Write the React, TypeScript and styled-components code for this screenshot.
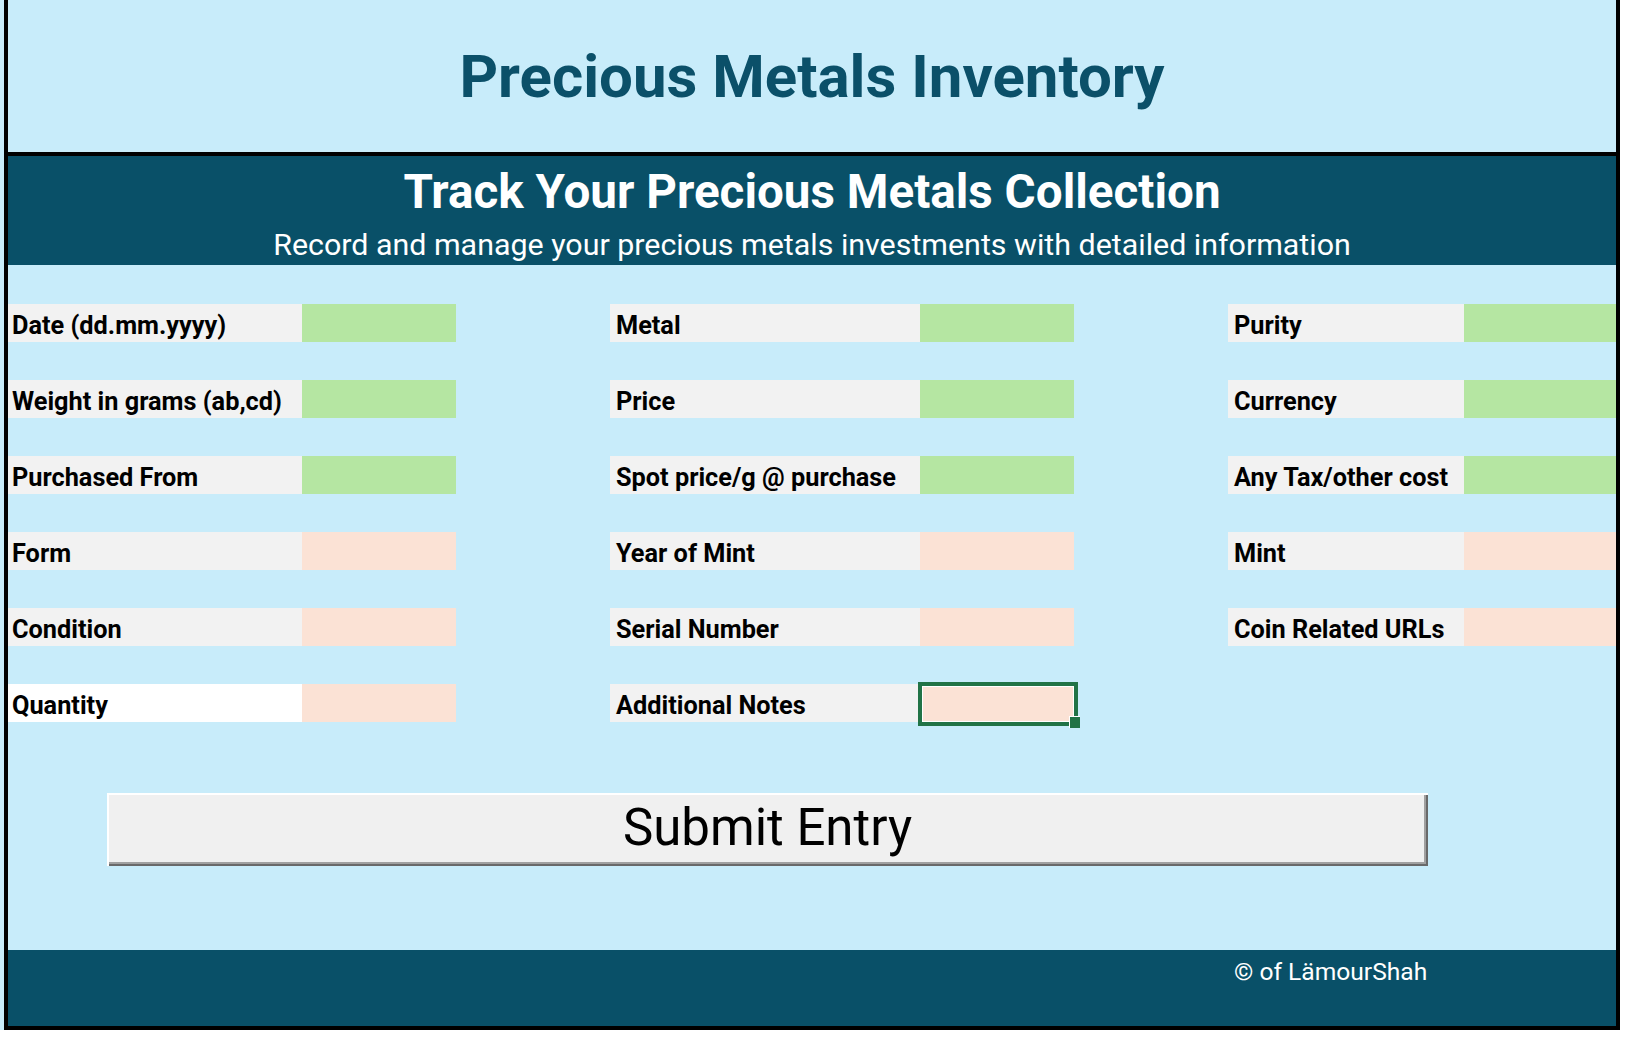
import React from "react";
import styled, { createGlobalStyle } from "styled-components";

const GlobalStyle = createGlobalStyle`
  html, body {
    margin: 0;
    padding: 0;
    background: #ffffff;
  }
  body {
    font-family: Roboto, "Liberation Sans", Arial, sans-serif;
  }
  * { box-sizing: border-box; }
`;

const LIGHT = "#C8ECFA";
const DARK = "#095068";
const INK = "#0B5069";

const Page = styled.div`
  width: 1620px;
  padding-left: 4px;
  background: ${LIGHT};
`;

const Frame = styled.div`
  width: 1616px;
  background: ${LIGHT};
  border-left: 4px solid #000;
  border-right: 4px solid #000;
  border-bottom: 4px solid #000;
  display: flex;
  flex-direction: column;
`;

const TitleBar = styled.header`
  height: 152px;
  padding-top: 41px;
  display: flex;
  justify-content: center;
  align-items: flex-start;
`;

const Title = styled.h1`
  margin: 0;
  font-family: Roboto, "Liberation Sans", sans-serif;
  font-weight: 700;
  font-size: 60px;
  line-height: 72px;
  color: ${INK};
  white-space: nowrap;
`;

const Band = styled.section`
  border-top: 4px solid #000;
  background: ${DARK};
  padding: 8px 0 2px;
  display: flex;
  flex-direction: column;
  align-items: center;
  color: #ffffff;
`;

const BandHeading = styled.h2`
  margin: 0;
  font-weight: 700;
  font-size: 47.6px;
  line-height: 56px;
  white-space: nowrap;
`;

const BandText = styled.p`
  margin: 7px 0 0;
  font-weight: 400;
  font-size: 30.4px;
  line-height: 36px;
  white-space: nowrap;
`;

const FormGrid = styled.div`
  margin-top: 39px;
  display: grid;
  grid-template-columns: 448px 464px 388px;
  column-gap: 154px;
  row-gap: 38px;
`;

const Field = styled.div<{ $labelWidth: number }>`
  height: 38px;
  display: grid;
  grid-template-columns: ${(p) => p.$labelWidth}px 1fr;
`;

const Label = styled.div<{ $bg: string; $pad: number }>`
  display: flex;
  align-items: flex-end;
  padding: 0 0 2px ${(p) => p.$pad}px;
  background: ${(p) => p.$bg};
  color: #000;
  font-weight: 700;
  font-size: 25.3px;
  line-height: 29px;
  white-space: nowrap;
  overflow: hidden;
`;

const InputCell = styled.div<{ $tone: "green" | "pink" }>`
  position: relative;
  background: ${(p) => (p.$tone === "green" ? "#B5E6A2" : "#FBE2D5")};
`;

const Selection = styled.div`
  position: absolute;
  top: -2px;
  left: -2px;
  right: -4px;
  bottom: -4px;
  border: 4px solid #217346;
  box-shadow: inset 0 0 0 1px #ffffff;
  pointer-events: none;
`;

const FillHandle = styled.div`
  position: absolute;
  right: -6px;
  bottom: -6px;
  width: 11px;
  height: 12px;
  background: #217346;
  border-left: 1px solid #ffffff;
  border-top: 1px solid #ffffff;
`;

const ButtonRow = styled.div`
  margin-top: 71px;
  padding-left: 99px;
  display: flex;
`;

const SubmitButton = styled.button`
  width: 1321px;
  height: 73px;
  padding: 0 0 4px;
  border: none;
  background: #f0f0f0;
  box-shadow: inset 2px 2px 0 #ffffff, inset -2px -2px 0 #696969,
    inset -4px -4px 0 #a0a0a0;
  font-family: Roboto, "Liberation Sans", sans-serif;
  font-weight: 400;
  font-size: 51px;
  line-height: 60px;
  color: #000;
  display: flex;
  align-items: center;
  justify-content: center;
  cursor: pointer;
`;

const Footer = styled.footer`
  margin-top: 84px;
  height: 76px;
  background: ${DARK};
  padding: 7px 0 0 1226px;
`;

const FooterText = styled.span`
  color: #ffffff;
  font-size: 24.6px;
  line-height: 29px;
  white-space: nowrap;
`;

type Cell = {
  label: string;
  tone: "green" | "pink";
  labelBg?: string;
  selected?: boolean;
} | null;

const columnSpec = [
  { labelWidth: 294, pad: 4 },
  { labelWidth: 310, pad: 6 },
  { labelWidth: 236, pad: 6 },
];

const rows: Cell[][] = [
  [
    { label: "Date (dd.mm.yyyy)", tone: "green" },
    { label: "Metal", tone: "green" },
    { label: "Purity", tone: "green" },
  ],
  [
    { label: "Weight in grams (ab,cd)", tone: "green" },
    { label: "Price", tone: "green" },
    { label: "Currency", tone: "green" },
  ],
  [
    { label: "Purchased From", tone: "green" },
    { label: "Spot price/g @ purchase", tone: "green" },
    { label: "Any Tax/other cost", tone: "green" },
  ],
  [
    { label: "Form", tone: "pink" },
    { label: "Year of Mint", tone: "pink" },
    { label: "Mint", tone: "pink" },
  ],
  [
    { label: "Condition", tone: "pink" },
    { label: "Serial Number", tone: "pink" },
    { label: "Coin Related URLs", tone: "pink" },
  ],
  [
    { label: "Quantity", tone: "pink", labelBg: "#ffffff" },
    { label: "Additional Notes", tone: "pink", selected: true },
    null,
  ],
];

export default function App() {
  return (
    <>
      <GlobalStyle />
      <Page>
        <Frame>
          <TitleBar>
            <Title>Precious Metals Inventory</Title>
          </TitleBar>
          <Band>
            <BandHeading>Track Your Precious Metals Collection</BandHeading>
            <BandText>
              Record and manage your precious metals investments with detailed
              information
            </BandText>
          </Band>
          <FormGrid>
            {rows.flatMap((row, r) =>
              row.map((cell, c) => {
                const spec = columnSpec[c];
                if (!cell) return <div key={`${r}-${c}`} />;
                return (
                  <Field key={`${r}-${c}`} $labelWidth={spec.labelWidth}>
                    <Label $bg={cell.labelBg ?? "#F2F2F2"} $pad={spec.pad}>
                      {cell.label}
                    </Label>
                    <InputCell $tone={cell.tone}>
                      {cell.selected && (
                        <>
                          <Selection />
                          <FillHandle />
                        </>
                      )}
                    </InputCell>
                  </Field>
                );
              })
            )}
          </FormGrid>
          <ButtonRow>
            <SubmitButton type="button">Submit Entry</SubmitButton>
          </ButtonRow>
          <Footer>
            <FooterText>© of LämourShah</FooterText>
          </Footer>
        </Frame>
      </Page>
    </>
  );
}
